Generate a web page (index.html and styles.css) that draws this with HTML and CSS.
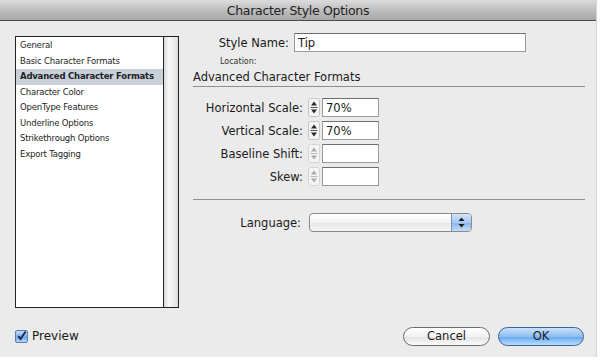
FILE: index.html
```html
<!DOCTYPE html>
<html lang="en">
<head>
  <meta charset="UTF-8">
  <title>Character Style Options</title>
  <link rel="stylesheet" href="styles.css">
</head>
<body>
  <div class="window">
    <header class="titlebar">Character Style Options</header>

    <div class="content">
      <div class="list-box">
        <ul class="list">
          <li>General</li>
          <li>Basic Character Formats</li>
          <li class="selected">Advanced Character Formats</li>
          <li>Character Color</li>
          <li>OpenType Features</li>
          <li>Underline Options</li>
          <li>Strikethrough Options</li>
          <li>Export Tagging</li>
        </ul>
        <div class="scrollbar"></div>
      </div>

      <div class="panel">
        <div class="name-row">
          <label class="name-label">Style Name:</label>
          <input type="text" class="text-field name-field" value="Tip">
        </div>
        <div class="location">Location:</div>
        <h2 class="section-title">Advanced Character Formats</h2>

        <div class="spin-rows">
          <div class="spin-row">
            <label class="spin-label">Horizontal Scale:</label>
            <svg class="spinner" width="12" height="19" viewBox="0 0 12 19"><rect x="0.5" y="0.5" width="11" height="18" rx="2" fill="#f4f4f4" stroke="#c4c4c4"/><path d="M6 3.5L9 7.5H3Z M6 15.5L9 11.5H3Z" fill="#2a2a2a"/><path d="M2.5 9.5H9.5" stroke="#555"/></svg>
            <input type="text" class="text-field spin-field" value="70%">
          </div>
          <div class="spin-row">
            <label class="spin-label">Vertical Scale:</label>
            <svg class="spinner" width="12" height="19" viewBox="0 0 12 19"><rect x="0.5" y="0.5" width="11" height="18" rx="2" fill="#f4f4f4" stroke="#c4c4c4"/><path d="M6 3.5L9 7.5H3Z M6 15.5L9 11.5H3Z" fill="#2a2a2a"/><path d="M2.5 9.5H9.5" stroke="#555"/></svg>
            <input type="text" class="text-field spin-field" value="70%">
          </div>
          <div class="spin-row">
            <label class="spin-label">Baseline Shift:</label>
            <svg class="spinner" width="12" height="19" viewBox="0 0 12 19"><rect x="0.5" y="0.5" width="11" height="18" rx="2" fill="#f4f4f4" stroke="#d4d4d4"/><path d="M6 3.5L9 7.5H3Z M6 15.5L9 11.5H3Z" fill="#aaaaaa"/><path d="M2.5 9.5H9.5" stroke="#bbb"/></svg>
            <input type="text" class="text-field spin-field" value="">
          </div>
          <div class="spin-row">
            <label class="spin-label">Skew:</label>
            <svg class="spinner" width="12" height="19" viewBox="0 0 12 19"><rect x="0.5" y="0.5" width="11" height="18" rx="2" fill="#f4f4f4" stroke="#d4d4d4"/><path d="M6 3.5L9 7.5H3Z M6 15.5L9 11.5H3Z" fill="#aaaaaa"/><path d="M2.5 9.5H9.5" stroke="#bbb"/></svg>
            <input type="text" class="text-field spin-field" value="">
          </div>
        </div>

        <hr class="separator">

        <div class="lang-row">
          <label class="lang-label">Language:</label>
          <div class="popup">
            <span class="popup-arrows">
              <svg width="7" height="11" viewBox="0 0 7 11"><path d="M3.5 0.5L6.5 4H0.5Z M3.5 10.5L6.5 7H0.5Z" fill="#1a1a1a"/></svg>
            </span>
          </div>
        </div>
      </div>
    </div>

    <footer class="footer">
      <label class="preview">
        <span class="checkbox">
          <svg width="12" height="12" viewBox="0 0 12 12"><path d="M2.5 6.2L5 9.2L10.5 1.2" fill="none" stroke="#10284a" stroke-width="2"/></svg>
        </span>
        Preview
      </label>
      <div class="buttons">
        <button class="btn">Cancel</button>
        <button class="btn btn-default">OK</button>
      </div>
    </footer>
  </div>
</body>
</html>
```

FILE: styles.css
```css
body {
  margin: 0;
  padding: 0;
  background-color: #ffffff;
  font-family: "DejaVu Sans", Verdana, sans-serif;
  color: #1a1a1a;
}
.window {
  width: 596px;
  height: 357px;
  background-color: #ebebeb;
  border-right: 1px solid #d6d6d6;
  display: flex;
  flex-direction: column;
}
.titlebar {
  height: 20px;
  line-height: 21px;
  text-align: center;
  font-size: 12.5px;
  color: #222;
  background: linear-gradient(#dcdcdc, #b9b9b9 60%, #a8a8a8);
  border-bottom: 1px solid #4e4e4e;
  letter-spacing: -0.3px;
}
.content {
  display: flex;
  padding: 0 11px 0 15px;
  height: 286px;
}
.list-box {
  display: flex;
  margin-top: 15px;
  width: 162px;
  height: 270px;
  border: 1px solid #222;
  background: #fff;
}
.list {
  list-style: none;
  margin: 0;
  padding: 1px 0 0 0;
  flex: 1;
  border-right: 1px solid #222;
}
.list li {
  height: 15.5px;
  line-height: 15.5px;
  padding-left: 4px;
  font-size: 8.5px;
  letter-spacing: -0.2px;
  color: #1e1e1e;
}
.list li.selected {
  background-color: #c9d0da;
  font-weight: bold;
}
.scrollbar {
  width: 14px;
  background: linear-gradient(to right, #d8d8d8, #f7f7f7 35%, #ececec 70%, #dcdcdc);
}
.panel {
  margin-left: 14px;
  flex: 1;
}
.name-row {
  display: flex;
  align-items: center;
  margin-top: 12px;
}
.name-label {
  width: 96px;
  text-align: right;
  font-size: 11.5px;
  margin-right: 5px;
}
.text-field {
  box-sizing: border-box;
  height: 19px;
  border: 1px solid #9a9a9a;
  border-top-color: #6e6e6e;
  background: #fff;
  font-family: "DejaVu Sans", Verdana, sans-serif;
  font-size: 11.5px;
  padding: 0 3px;
  color: #1a1a1a;
  margin: 0;
}
.name-field {
  width: 232px;
}
.location {
  font-size: 8px;
  margin: 5px 0 0 27px;
  height: 10px;
  line-height: 10px;
  color: #333;
}
.section-title {
  font-weight: normal;
  font-size: 11.5px;
  margin: 3px 0 0 0;
  padding-bottom: 1px;
  height: 15px;
  line-height: 15px;
  border-bottom: 1px solid #8e8e8e;
}
.spin-rows {
  margin-top: 11px;
  display: flex;
  flex-direction: column;
  gap: 4px;
}
.spin-row {
  display: flex;
  align-items: center;
  height: 19px;
}
.spin-label {
  width: 110px;
  text-align: right;
  font-size: 11.5px;
  margin-right: 5px;
}
.spinner {
  display: block;
  margin-right: 2px;
}
.spin-field {
  width: 57px;
}
.separator {
  border: none;
  border-top: 1px solid #8e8e8e;
  margin: 13px 0 0 0;
  height: 0;
}
.lang-row {
  display: flex;
  align-items: center;
  margin-top: 13px;
}
.lang-label {
  width: 108px;
  text-align: right;
  font-size: 11.5px;
  margin-right: 8px;
}
.popup {
  box-sizing: border-box;
  width: 163px;
  height: 19px;
  border: 1px solid #8a8a8a;
  border-radius: 4px;
  background: linear-gradient(#ffffff, #f3f3f3 50%, #e6e6e6 51%, #f5f5f5);
  display: flex;
  justify-content: flex-end;
  overflow: hidden;
}
.popup-arrows {
  width: 19px;
  border-left: 1px solid #7c94b8;
  background: linear-gradient(#d2e4fa, #a8c8f0 50%, #84b2ec 51%, #c4def9);
  display: flex;
  align-items: center;
  justify-content: center;
}
.footer {
  display: flex;
  align-items: center;
  justify-content: space-between;
  padding: 0 12px 0 15px;
  flex: 1;
}
.preview {
  display: flex;
  align-items: center;
  font-size: 12px;
  gap: 4px;
  margin-top: 8px;
}
.checkbox {
  box-sizing: border-box;
  width: 13px;
  height: 13px;
  border: 1px solid #5a7fb0;
  border-radius: 2px;
  background: linear-gradient(#c6dcf6, #82b0ea 50%, #6aa2e6 51%, #b3d4fb);
  display: flex;
  align-items: center;
  justify-content: center;
}
.buttons {
  display: flex;
  gap: 8px;
  margin-top: 8px;
}
.btn {
  box-sizing: border-box;
  height: 19px;
  width: 87px;
  border: 1px solid #6e6e6e;
  border-radius: 10px;
  background: linear-gradient(#ffffff, #f2f2f2 50%, #e2e2e2 51%, #fbfbfb);
  font-family: "DejaVu Sans", Verdana, sans-serif;
  font-size: 11.5px;
  color: #1a1a1a;
  padding: 0;
}
.btn-default {
  width: 86px;
  border-color: #3c64a0;
  background: linear-gradient(#c9e1fb, #8dbff3 50%, #63a5ee 51%, #b9ddfd);
}
```
